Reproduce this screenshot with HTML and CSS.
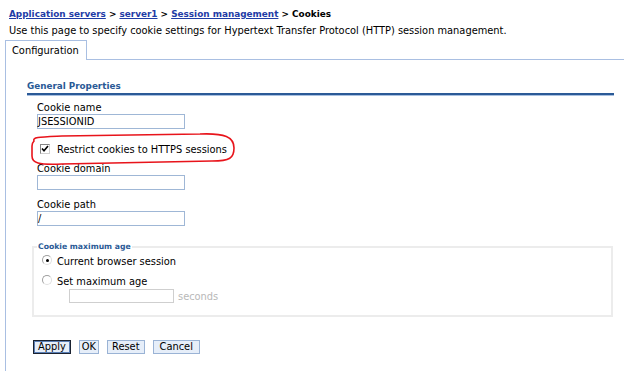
FILE: index.html
```html
<!DOCTYPE html>
<html>
<head>
<meta charset="utf-8">
<link rel="stylesheet" href="styles.css">
</head>
<body>
<div class="page">
  <div class="crumbs"><a href="#">Application servers</a> &gt; <a href="#">server1</a> &gt; <a href="#">Session management</a> &gt; <b>Cookies</b></div>
  <div class="desc">Use this page to specify cookie settings for Hypertext Transfer Protocol (HTTP) session management.</div>
  <div class="tabbar">
    <div class="tab">Configuration</div>
    <div class="tabfill"></div>
  </div>
  <div class="panel">
    <div class="section">General Properties</div>
    <div class="fields">
      <div class="label">Cookie name</div>
      <div class="input">JSESSIONID</div>
      <div class="checkrow"><span class="check"><svg width="8" height="8" viewBox="0 0 8 8"><path d="M1 3.5 L3 5.8 L7 1" fill="none" stroke="#000" stroke-width="1.6"/></svg></span><span>Restrict cookies to HTTPS sessions</span></div>
      <div class="label l2">Cookie domain</div>
      <div class="input"></div>
      <div class="label l3">Cookie path</div>
      <div class="input">/</div>
    </div>
    <fieldset class="age">
      <legend>Cookie maximum age</legend>
      <div class="radiorow r1"><span class="radio on"></span><span>Current browser session</span></div>
      <div class="radiorow r2"><span class="radio"></span><span>Set maximum age</span></div>
      <div class="secrow"><span class="input small"></span><span class="sec">seconds</span></div>
    </fieldset>
    <div class="buttons">
      <span class="btn def">Apply</span>
      <span class="btn ok">OK</span>
      <span class="btn">Reset</span>
      <span class="btn cancel">Cancel</span>
    </div>
  </div>
  <svg class="mark" width="634" height="371" viewBox="0 0 634 371"><path d="M34 141 C32 137 40 137 62 136 L200 134 C225 133 234 137 234 148 C234 158 230 161 212 161 L62 164 C38 165 32 163 32 156 L32 146 C32 143 33 142 34 141 Z" fill="none" stroke="#e8141b" stroke-width="1.6"/></svg>
</div>
</body>
</html>
```
FILE: styles.css
```css
html, body {
  margin: 0;
  padding: 0;
  background: #fff;
}
.page {
  position: relative;
  width: 634px;
  height: 371px;
  overflow: hidden;
  font-family: "DejaVu Sans", Verdana, sans-serif;
  font-size: 9.85px;
  color: #000;
}
.crumbs {
  padding: 7px 0 0 9px;
  line-height: 14px;
  font-weight: bold;
  font-size: 8.9px;
}
.crumbs a {
  color: #1f3ca6;
  text-decoration: underline;
}
.desc {
  margin-top: 3px;
  padding-left: 9px;
  line-height: 14px;
}
.tabbar {
  display: flex;
  margin: 2px 0 0 5px;
  width: 619px;
}
.tab {
  height: 19px;
  line-height: 19px;
  padding: 0 7px 0 6px;
  border: 1px solid #a9bfe2;
  border-bottom: none;
  background: #fff;
}
.tabfill {
  flex: 1;
  border-bottom: 1px solid #a9bfe2;
}
.panel {
  margin-left: 5px;
  width: 598px;
  height: 311px;
  border-left: 1px solid #a9bfe2;
  padding: 20px 0 0 21px;
}
.section {
  width: 587px;
  line-height: 13px;
  font-weight: bold;
  font-size: 8.8px;
  color: #2a5a96;
  border-bottom: 2px solid #2b5a97;
  box-shadow: 0 1px 0 #a8c0e0;
}
.fields {
  padding-left: 10px;
  padding-top: 7px;
}
.label {
  line-height: 12px;
  height: 12px;
}
.l2 { margin-top: 7px; }
.l3 { margin-top: 9px; }
.input {
  box-sizing: border-box;
  width: 148px;
  height: 15px;
  border: 1px solid #9fb7d6;
  line-height: 13px;
  padding-left: 0;
  background: #fff;
}
.checkrow {
  display: flex;
  align-items: center;
  gap: 7px;
  margin-top: 13px;
  height: 14px;
  padding-left: 3px;
}
.check {
  box-sizing: border-box;
  width: 10px;
  height: 10px;
  border: 1px solid #858585;
  border-right-color: #d0d0d0;
  border-bottom-color: #d0d0d0;
  display: flex;
  align-items: center;
  justify-content: center;
}
fieldset.age {
  margin: 16px 0 0 5px;
  width: 581px;
  height: 75px;
  padding: 0 0 0 3px;
  border: 2px solid #ececec;
  box-sizing: border-box;
}
.age legend {
  padding: 0 1px;
  font-size: 7.7px;
  font-weight: bold;
  color: #2a5a96;
  line-height: 10px;
}
.radiorow {
  display: flex;
  align-items: center;
  gap: 5px;
  height: 14px;
  padding-left: 5px;
}
.r1 { margin-top: 2px; }
.r2 { margin-top: 6px; }
.radio {
  box-sizing: border-box;
  width: 10px;
  height: 10px;
  border-radius: 50%;
  border: 1px solid #a0a0a0;
  border-right-color: #e0e0e0;
  border-bottom-color: #e0e0e0;
  position: relative;
  margin-top: -2px;
}
.radio.on::after {
  content: "";
  position: absolute;
  left: 2.5px;
  top: 2.5px;
  width: 3px;
  height: 3px;
  border-radius: 50%;
  background: #000;
}
.secrow {
  display: flex;
  align-items: center;
  gap: 4px;
  margin: 1px 0 0 32px;
}
.input.small {
  width: 105px;
  height: 14px;
  border-color: #cfcfcf;
}
.sec {
  color: #b8b8b8;
}
.buttons {
  display: flex;
  gap: 8px;
  margin: 23px 0 0 6px;
}
.btn {
  box-sizing: border-box;
  height: 14px;
  line-height: 12px;
  padding: 0 4px;
  border: 1px solid #9ab3d5;
  background: #e6eef9;
}
.btn.ok {
  padding: 0 2px;
}
.btn.cancel {
  padding: 0 6px;
}
.btn.def {
  border: 1px solid #1a2230;
  box-shadow: inset 0 0 0 1px #5b7fb5;
  padding: 0 4px;
}
.mark {
  position: absolute;
  left: 0;
  top: 0;
  pointer-events: none;
}
```
